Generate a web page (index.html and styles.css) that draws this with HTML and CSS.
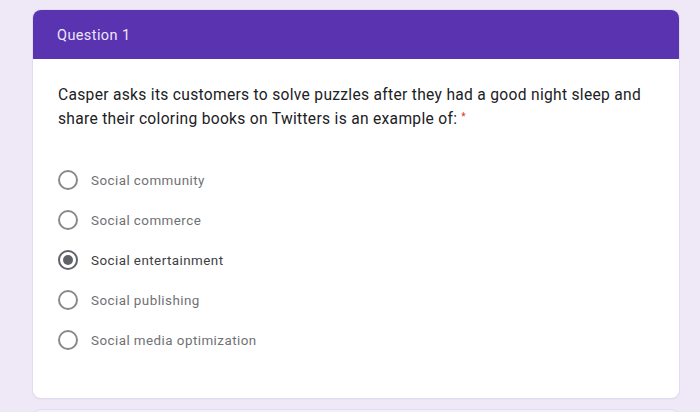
FILE: index.html
```html
<!DOCTYPE html>
<html>
<head>
<meta charset="utf-8">
<link rel="stylesheet" href="styles.css">
</head>
<body>
<div class="page">
  <div class="card">
    <div class="card-head">Question 1</div>
    <div class="card-body">
      <p class="question">Casper asks its customers to solve puzzles after they had a good night sleep and share their coloring books on Twitters is an example of:<span class="req">*</span></p>
      <div class="options">
        <div class="opt"><span class="radio"></span><span class="label">Social community</span></div>
        <div class="opt"><span class="radio"></span><span class="label">Social commerce</span></div>
        <div class="opt selected"><span class="radio"><span class="dot"></span></span><span class="label">Social entertainment</span></div>
        <div class="opt"><span class="radio"></span><span class="label">Social publishing</span></div>
        <div class="opt"><span class="radio"></span><span class="label">Social media optimization</span></div>
      </div>
    </div>
  </div>
  <div class="card next"></div>
</div>
</body>
</html>
```
FILE: styles.css
```css
html, body {
  margin: 0;
  padding: 0;
  background: #efe8f7;
  font-family: Roboto, "Liberation Sans", Arial, sans-serif;
}
.page {
  padding: 10px 21px 0 33px;
  display: flex;
  flex-direction: column;
  gap: 12px;
  height: 412px;
  box-sizing: border-box;
  overflow: hidden;
}
.card {
  width: 646px;
  background: #fff;
  border-radius: 8px;
  box-shadow: 0 0 0 1px #e3dcee, 0 1px 2px rgba(60, 40, 110, 0.12);
  overflow: hidden;
  flex-shrink: 0;
}
.card-head {
  height: 49px;
  background: #5a33b0;
  color: #ece6fa;
  font-size: 14.5px;
  letter-spacing: 0.4px;
  padding-left: 24px;
  display: flex;
  align-items: center;
  box-sizing: border-box;
  padding-top: 1px;
}
.card-body {
  padding: 24px 20px 38px 25px;
  height: 339px;
  box-sizing: border-box;
}
.question {
  margin: 0;
  font-size: 15.6px;
  line-height: 24px;
  color: #202124;
  letter-spacing: 0.3px;
}
.req {
  color: #d93025;
  font-size: 10px;
  line-height: 1;
  vertical-align: 4px;
  margin-left: 4px;
}
.options {
  margin-top: 29px;
  display: flex;
  flex-direction: column;
}
.opt {
  height: 40px;
  display: flex;
  align-items: center;
}
.radio {
  width: 16px;
  height: 16px;
  border: 2px solid #8a8a8e;
  border-radius: 50%;
  display: flex;
  align-items: center;
  justify-content: center;
  flex-shrink: 0;
}
.selected .radio {
  border-color: #5f6368;
}
.dot {
  width: 10px;
  height: 10px;
  border-radius: 50%;
  background: #5f6368;
}
.label {
  margin-left: 13px;
  font-size: 13.4px;
  letter-spacing: 0.45px;
  color: #6f7175;
}
.selected .label {
  color: #3c4043;
}
.next {
  height: 40px;
  background: #f3eefb;
}
```
